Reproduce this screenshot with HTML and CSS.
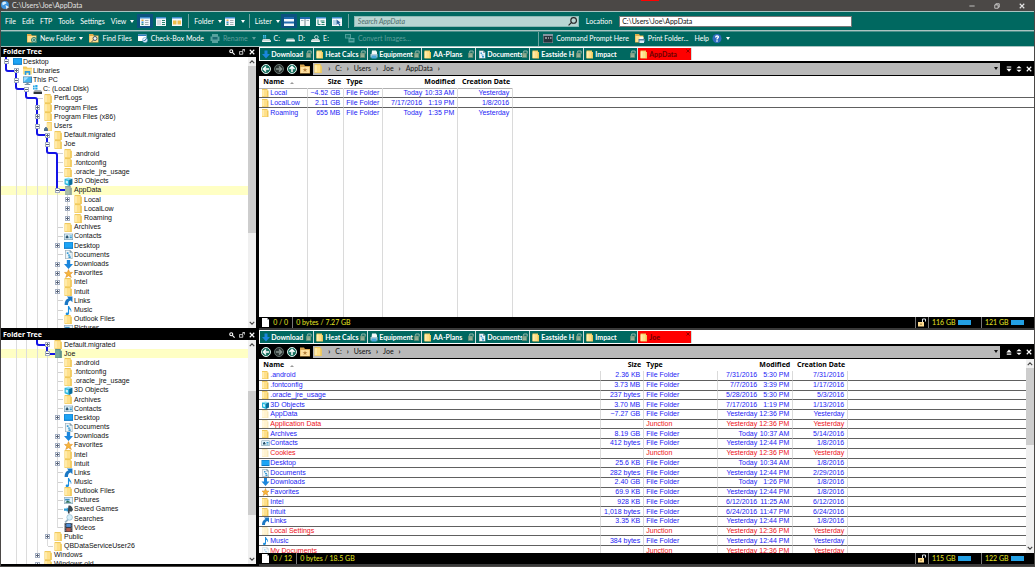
FILE: index.html
```html
<!DOCTYPE html>
<html lang="en">
<head>
    <meta charset="UTF-8">
    <meta name="viewport" content="width=device-width, initial-scale=1.0">
    <title>C:\Users\Joe\AppData</title>
    <link rel="stylesheet" href="styles.css">
</head>
<body>
<!-- Icon set -->
<svg class="defs" aria-hidden="true">
    <symbol id="folder" viewBox="0 0 16 16"><path fill="#f0c95c" d="M1 0h11v3h2v13H1z"/><path fill="#ffe08a" d="M1 2h10v13H1z"/><path fill="#ffedaf" d="M2 2h3v12H2z"/></symbol>
    <symbol id="folder-open" viewBox="0 0 16 16"><path fill="#93a79b" d="M2 0h10v3h2v13H2z"/><path fill="#a9bda9" d="M2 2h8v13H2z"/></symbol>
    <symbol id="folder-teal" viewBox="0 0 16 16"><path fill="#5f928c" d="M2 0h10v3h2v13H2z"/><path fill="#78a79b" d="M2 2h8v13H2z"/></symbol>
    <symbol id="users" viewBox="0 0 16 16"><path fill="#f4cf69" d="M5 0h9v16H5z"/><path fill="#ffe699" d="M5 2h7v13H5z"/><path fill="#50708c" d="M0 16v-5h2V9h3v2h2v5z"/></symbol>
    <symbol id="desktop" viewBox="0 0 16 16"><path fill="#0a78c8" d="M0 2h16v12H0z"/><path fill="#1ea4f4" d="M1 3h14v9H1z"/></symbol>
    <symbol id="libraries" viewBox="0 0 16 16"><path fill="#f4c95b" d="M0 1h6l2 2h8v5H0z"/><path fill="#ffe28c" d="M0 5h16v10H0z"/><path fill="#2b9be0" d="M3 16V9h10v7h-3v-4H6v4z"/></symbol>
    <symbol id="pc" viewBox="0 0 16 16"><path fill="#3a6c94" d="M0 1h16v11H0z"/><path fill="#45b4ee" d="M1 2h14v9H1z"/><path fill="#9fdcff" d="M1 11 10 2H1z"/><path fill="#7890a4" d="M6 12h4v2h3v2H3v-2h3z"/></symbol>
    <symbol id="drive" viewBox="0 0 16 16"><path fill="#24a7e8" d="M0 1h3v3H0zM4 0h4v4H4zM0 5h3v3H0zM4 5h4v3H4z"/><path fill="#a8b0b4" d="M3 9h11l2 3H1z"/><path fill="#303638" d="M1 12h15v4H1z"/></symbol>
    <symbol id="cube" viewBox="0 0 16 16"><path fill="#8fe0f4" d="m1 3 7-2 7 2-6 2z"/><path fill="#26b4dc" d="M1 3l8 2v11l-8-3z"/><path fill="#0a6d9c" d="m9 5 6-2v10l-6 3z"/><path fill="#c9f2fb" d="M3 6l4 1v5l-4-1z"/></symbol>
    <symbol id="contacts" viewBox="0 0 16 16"><path fill="#6c93a8" d="M0 3h16v11H0z"/><path fill="#dff0f8" d="M1 4h14v9H1z"/><path fill="#28516c" d="M3 11V8h1V6h3v2h1v3z"/><path fill="#3a9bd0" d="M10 6h4v2h-4zM10 9h4v2h-4z"/></symbol>
    <symbol id="doc" viewBox="0 0 16 16"><path fill="#8aa0ac" d="M2 0h9l4 4v12H2z"/><path fill="#eef5f8" d="M3 1h7v4h4v10H3z"/><path fill="#3b9cd4" d="M5 4h3v3H5zM7 8h4v2H7zM8 11h4v3H8z"/></symbol>
    <symbol id="download" viewBox="0 0 16 16"><path fill="#1b86dc" d="M5 0h6v7h5l-8 9-8-9h5z"/></symbol>
    <symbol id="star" viewBox="0 0 16 16"><path fill="#f8b63c" stroke="#d98a1c" d="m8 1 2 5h5l-4 4 2 5-5-3-5 3 2-5-4-4h5z"/></symbol>
    <symbol id="link" viewBox="0 0 16 16"><path fill="#1c78c4" d="M5 1h10v10l-3-3c-4 1-5 4-5 8H1c0-6 2-10 7-12z"/></symbol>
    <symbol id="music" viewBox="0 0 16 16"><path fill="#1e8fdf" d="M7 0h2c0 3 5 4 4 10h-1c0-3-1-4-3-4v7c0 4-6 4-6 1 0-2 2-3 4-2z"/></symbol>
    <symbol id="pictures" viewBox="0 0 16 16"><path fill="#7d9bb0" d="M0 2h16v12H0z"/><path fill="#e4f3fb" d="M1 3h14v10H1z"/><path fill="#3c8fc4" d="M2 5h8v3H2z"/><path fill="#2a6e58" d="M2 12l4-4 8 4z"/></symbol>
    <symbol id="games" viewBox="0 0 16 16"><path fill="#2d9bd4" d="M0 6h5V4l4 4-4 5v-3H0z"/><path fill="#3a4a54" d="M8 1c4-1 7 2 8 8l-3 3-3-1v4H7V8z"/></symbol>
    <symbol id="search" viewBox="0 0 16 16"><path fill="none" stroke="#9bb4c4" stroke-width="3" d="m2 15 5-5"/><circle cx="10" cy="6" r="5" fill="#d6effa" stroke="#7ea9c2"/></symbol>
    <symbol id="videos" viewBox="0 0 16 16"><path fill="#333b46" d="M1 0h14v16H1z"/><path fill="#4f8fd8" d="M4 1h8v6H4z"/><path fill="#b45a4c" d="M4 9h8v6H4z"/><path stroke="#d0d6dc" stroke-dasharray="2 2" d="M2 0v16M14 0v16"/></symbol>
    <symbol id="printer" viewBox="0 0 16 16"><path fill="#f5f9fa" d="M4 0h8l2 3v5H3z"/><path fill="#b4cbd8" d="M1 7h14v7H1z"/><path fill="#48a6dc" d="M3 10h10v6H3z"/></symbol>
    <symbol id="globe" viewBox="0 0 16 16"><circle cx="7" cy="7" r="7" fill="#3e94e0"/><path fill="#d8efff" d="M2 3c3-3 7-2 8 1L6 6l-3 2z"/><path fill="#eaf2f8" d="M8 7l7 4-3 1-2 3z"/></symbol>
    <symbol id="new-folder" viewBox="0 0 20 18"><path fill="#e2ae4c" d="M0 0h8l2 3h9v14H0z"/><path fill="#ffdf8d" d="M1 4h17v12H1z"/><circle cx="14" cy="12" r="5" fill="#dff4e6" stroke="#1f7867" stroke-width="2"/><path stroke="#176a54" stroke-width="2" d="M14 9v6M11 12h6"/></symbol>
    <symbol id="find" viewBox="0 0 20 18"><path fill="#e2ae4c" d="M0 0h8l2 3h9v14H0z"/><path fill="#ffdf8d" d="M1 4h17v12H1z"/><path stroke="#4d5860" stroke-width="2" d="m5 16 4-4"/><circle cx="12" cy="9" r="4" fill="#e4f4fa" stroke="#4d5860" stroke-width="2"/></symbol>
    <symbol id="check-mode" viewBox="0 0 20 18"><path fill="#fff" d="M0 1h17v13H0z"/><path fill="#2d79bd" d="M0 1h17v3H0z"/><circle cx="14" cy="12" r="5" fill="#e8f4fc" stroke="#3c8ac0"/><path fill="none" stroke="#17629c" stroke-width="2" d="m11 12 2 2 4-5"/></symbol>
    <symbol id="rename" viewBox="0 0 20 18"><path fill="#57a29e" d="M4 0h12v5h3v9h-3v4H4v-4H1V5h3z"/><path fill="#1b6b72" d="M5 6h10v5H5z"/></symbol>
    <symbol id="bar-drive" viewBox="0 0 20 16"><path fill="#49c0f4" d="M2 0h3v4H2zM6 0h3v4H6zM2 5h3v3H2zM6 5h3v3H6z"/><path fill="#cdd7d8" d="M2 9h15l2 3H0z"/><path fill="#f2f6f6" d="M0 12h20v4H0z"/></symbol>
    <symbol id="disk" viewBox="0 0 20 16"><path fill="#cdd7d8" d="M3 8h14l3 3H0z"/><path fill="#f2f6f6" d="M0 11h20v4H0z"/></symbol>
    <symbol id="optical" viewBox="0 0 20 16"><circle cx="12" cy="5" r="4" fill="none" stroke="#dfe8ea" stroke-width="2"/><path fill="#cdd7d8" d="M3 9h14l3 3H0z"/><path fill="#f2f6f6" d="M0 12h20v4H0z"/></symbol>
    <symbol id="convert" viewBox="0 0 20 18"><path fill="#4c9c98" d="M0 0h12v9H0z"/><path fill="#12766d" d="M2 2h8v5H2z"/><path fill="#5aa5a3" d="M7 8h12v9H7z"/><path fill="#20827a" d="M9 10h8v4H9z"/></symbol>
    <symbol id="cmd" viewBox="0 0 20 18"><path fill="#8395a0" d="M0 0h20v18H0z"/><path fill="#26323b" d="M1 4h18v13H1z"/><path stroke="#e8eef0" stroke-width="2" d="M4 8h4M10 8h2M14 8h3"/></symbol>
    <symbol id="print-folder" viewBox="0 0 20 18"><path fill="#e2ae4c" d="M0 0h8l2 3h7v14H0z"/><path fill="#ffdf8d" d="M1 4h15v12H1z"/><path fill="#f4f8fa" d="M9 6h8v5H9z"/><path fill="#4d7ea2" d="M7 10h13v6H7z"/><path fill="#d8ecf7" d="M9 13h9v5H9z"/></symbol>
    <symbol id="view-list" viewBox="0 0 20 18"><path fill="#f4f8fb" d="M0 0h20v18H0z"/><path fill="#3d8ccc" d="M0 0h20v3H0z"/><path fill="#e0a83c" d="M3 5h4v3H3z"/><path fill="#3d8ccc" d="M3 9h4v3H3z"/><path fill="#2c8c70" d="M3 13h4v3H3z"/><path stroke="#a3aeb4" stroke-width="2" d="M10 7h7M10 11h7M10 15h7"/></symbol>
    <symbol id="view-details" viewBox="0 0 20 18"><path fill="#f4f8fb" d="M0 0h20v18H0z"/><path fill="#3d8ccc" d="M0 0h20v3H0z"/><path fill="#d6dee2" d="M2 6h8v10H2z"/><path stroke="#27856e" stroke-width="2" d="M12 7h6M12 11h6M12 15h6"/></symbol>
    <symbol id="view-thumbs" viewBox="0 0 20 18"><path fill="#f4f8fb" d="M0 0h20v18H0z"/><path fill="#3d8ccc" d="M0 0h20v3H0z"/><path fill="#eebe4c" d="M2 7h7v8H2zM11 7h7v8h-7z"/></symbol>
    <symbol id="dual-h" viewBox="0 0 20 18"><path fill="#f4f8fb" d="M0 0h20v18H0z"/><path fill="#236cb0" d="M0 0h20v4H0zM0 9h20v4H0z"/></symbol>
    <symbol id="dual-v" viewBox="0 0 20 18"><path fill="#f4f8fb" d="M0 0h20v18H0z"/><path fill="#236cb0" d="M0 0h20v4H0z"/><path fill="#74868f" d="M9 4h2v14H9z"/><path fill="#9fb2ba" d="M2 6h5v2H2zM13 6h5v2h-5z"/></symbol>
    <symbol id="tree-view" viewBox="0 0 20 18"><path fill="#f4f8fb" d="M0 0h20v18H0z"/><path fill="#3d8ccc" d="M0 0h20v3H0z"/><path fill="none" stroke="#27856e" stroke-width="2" d="M4 5v10h5M9 8h8M11 11h6M11 15h6"/></symbol>
    <symbol id="viewer" viewBox="0 0 20 18"><path fill="#f4f8fb" d="M0 0h20v18H0z"/><path fill="#3d8ccc" d="M0 0h20v3H0z"/><path fill="#b6d4ea" d="M2 6h6v10H2z"/><path fill="#285f9c" d="M9 5l8 6-3 1 3 4-2 2-3-5-3 3z"/></symbol>
    <symbol id="lock" viewBox="0 0 14 18"><path fill="none" stroke="#a9c2b2" stroke-width="2" d="M4 8V2h8v6"/><path fill="#5f8a74" d="M0 6h12v12H0z"/><path stroke="#a7bfa2" stroke-width="2" d="M2 9h8M2 12h8M2 15h8"/></symbol>
    <symbol id="unlock" viewBox="0 0 18 18"><path fill="none" stroke="#dce2e4" stroke-width="2" d="M9 8V2h6v5"/><path fill="#ffdc91" d="M0 8h12v9H0z"/><path fill="#7c5c20" d="M5 11h2v3H5z"/></symbol>
    <symbol id="page" viewBox="0 0 14 18"><path fill="#fff" d="M0 0h10l4 4v14H0z"/><path fill="#b9c0c4" d="M10 0l4 4h-4z"/></symbol>
    <symbol id="back" viewBox="0 0 20 20"><circle cx="10" cy="10" r="9" fill="#18705f" stroke="#e2f2ee" stroke-width="2"/><path fill="none" stroke="#fff" stroke-width="3" d="M16 10H5M10 5l-5 5 5 5"/></symbol>
    <symbol id="forward" viewBox="0 0 20 20"><circle cx="10" cy="10" r="9" fill="#2c3432" stroke="#65726e" stroke-width="2"/><path fill="none" stroke="#87948f" stroke-width="3" d="M4 10h11M10 5l5 5-5 5"/></symbol>
    <symbol id="up" viewBox="0 0 20 20"><circle cx="10" cy="10" r="9" fill="#18705f" stroke="#e2f2ee" stroke-width="2"/><path fill="none" stroke="#fff" stroke-width="3" d="M10 16V5M5 10l5-5 5 5"/></symbol>
    <symbol id="fav-folder" viewBox="0 0 20 20"><path fill="#d9a650" d="M0 1h8l2 3h10v15H0z"/><path fill="#ffe0a0" d="M1 6h18v12H1z"/><path fill="#b98542" d="m10 7 1 3h4l-3 2 1 4-3-2-3 2 1-4-3-2h4z"/></symbol>
    <symbol id="help" viewBox="0 0 20 20"><circle cx="10" cy="10" r="10" fill="#2f6cc0"/><path fill="none" stroke="#fff" stroke-width="3" d="M7 8c0-5 7-4 6-1-1 2-3 2-3 5M10 14v3"/></symbol>
    <symbol id="glass" viewBox="0 0 16 16"><circle cx="10" cy="6" r="5" fill="none" stroke="currentColor" stroke-width="2"/><path stroke="currentColor" stroke-width="2" d="m1 15 5-5"/></symbol>
    <symbol id="find-small" viewBox="0 0 16 16"><circle cx="6" cy="6" r="4" fill="none" stroke="currentColor" stroke-width="3"/><path stroke="currentColor" stroke-width="3" d="m9 9 6 6"/></symbol>
    <symbol id="pin" viewBox="0 0 16 16"><path fill="none" stroke="currentColor" stroke-width="2" d="M1 7h9v7H1zM8 6l6-5M9 1h6v6"/></symbol>
    <symbol id="close" viewBox="0 0 16 16"><path stroke="currentColor" stroke-width="3" d="m2 2 12 12M14 2 2 14"/></symbol>
    <symbol id="restore" viewBox="0 0 16 16"><path fill="none" stroke="currentColor" stroke-width="2" d="M2 5h9v9H2zM5 5V2h9v9h-3"/></symbol>
    <symbol id="minimize" viewBox="0 0 16 16"><path stroke="currentColor" stroke-width="2" d="M1 8h14"/></symbol>
    <symbol id="pane-down" viewBox="0 0 16 16"><path fill="currentColor" d="M2 1h12v3H2zM1 7h14l-7 8z"/></symbol>
    <symbol id="pane-up" viewBox="0 0 16 16"><path fill="currentColor" d="M2 12h12v3H2zM1 9h14L8 1z"/></symbol>
    <symbol id="pane-split" viewBox="0 0 16 16"><path fill="currentColor" d="M1 6h14L8 0zM1 10h14l-7 6z"/></symbol>
    <symbol id="chev-up" viewBox="0 0 16 16"><path fill="none" stroke="#444" stroke-width="3" d="m2 11 6-6 6 6"/></symbol>
    <symbol id="chev-down" viewBox="0 0 16 16"><path fill="none" stroke="#444" stroke-width="3" d="m2 5 6 6 6-6"/></symbol>
</svg>

<div class="app">
    <header class="titlebar">
        <svg class="icon"><use href="#globe"/></svg>
        <h1>C:\Users\Joe\AppData</h1>
        <span class="recording"></span>
        <div class="window-buttons">
            <button aria-label="Minimize"><svg class="mini"><use href="#minimize"/></svg></button>
            <button aria-label="Restore"><svg class="mini"><use href="#restore"/></svg></button>
            <button aria-label="Close"><svg class="mini"><use href="#close"/></svg></button>
        </div>
    </header>

    <nav class="toolbar menubar">
        <div class="group menus">
            <button>File</button><button>Edit</button><button>FTP</button><button>Tools</button><button>Settings</button><button class="drop">View</button>
        </div>
        <div class="group views">
            <button class="on" aria-label="List view"><svg class="tool"><use href="#view-list"/></svg></button>
            <button aria-label="Details view"><svg class="tool"><use href="#view-details"/></svg></button>
            <button aria-label="Thumbnails view"><svg class="tool"><use href="#view-thumbs"/></svg></button>
        </div>
        <div class="group sep">
            <button class="drop">Folder</button>
            <button class="drop wide" aria-label="Folder format"><svg class="tool"><use href="#view-list"/></svg></button>
        </div>
        <div class="group sep">
            <button class="drop">Lister</button>
        </div>
        <div class="group views">
            <button class="on" aria-label="Dual horizontal"><svg class="tool"><use href="#dual-h"/></svg></button>
            <button aria-label="Dual vertical"><svg class="tool"><use href="#dual-v"/></svg></button>
            <button aria-label="Tree"><svg class="tool"><use href="#tree-view"/></svg></button>
            <button aria-label="Viewer"><svg class="tool"><use href="#viewer"/></svg></button>
        </div>
        <div class="group sep fields">
            <div class="search">
                <input type="search" aria-label="Search" placeholder="Search AppData">
                <svg class="icon"><use href="#glass"/></svg>
            </div>
            <label for="location">Location</label>
            <input id="location" class="location" type="text" value="C:\Users\Joe\AppData">
        </div>
    </nav>

    <nav class="toolbar actions">
        <div class="group main-actions">
            <button class="drop"><svg class="tool"><use href="#new-folder"/></svg>New Folder</button>
            <button><svg class="tool"><use href="#find"/></svg>Find Files</button>
            <button><svg class="tool"><use href="#check-mode"/></svg>Check-Box Mode</button>
            <button class="drop muted"><svg class="tool"><use href="#rename"/></svg>Rename</button>
            <span class="drives">
                <button><svg class="drive"><use href="#bar-drive"/></svg>C:</button>
                <button><svg class="drive"><use href="#disk"/></svg>D:</button>
                <button><svg class="drive"><use href="#optical"/></svg>E:</button>
            </span>
            <button class="muted"><svg class="tool"><use href="#convert"/></svg>Convert Images...</button>
        </div>
        <div class="group sep more-actions">
            <button><svg class="tool"><use href="#cmd"/></svg>Command Prompt Here</button>
            <button><svg class="tool"><use href="#print-folder"/></svg>Print Folder...</button>
            <button class="drop help">Help <svg class="tool"><use href="#help"/></svg></button>
        </div>
    </nav>

    <main class="workspace">
        <!-- Upper tree -->
        <aside class="tree-pane">
            <div class="pane-title">
                <h2>Folder Tree</h2>
                <button aria-label="Find"><svg class="mini"><use href="#find-small"/></svg></button>
                <button aria-label="Float"><svg class="mini"><use href="#pin"/></svg></button>
                <button aria-label="Close tree"><svg class="mini"><use href="#close"/></svg></button>
            </div>
            <div class="tree-view">
                <div class="tree-scroll">
                    <svg class="guides" aria-hidden="true">
                        <path class="guide" d="M15 23V280M25 32V280M36 41V280M46 96V280M56 96V280M66 138V161"/>
                        <path class="trail" d="M5 0V12Q5 14 7 14H15V30Q15 32 17 32H25V39Q25 41 27 41H34Q36 41 36 43V76Q36 78 38 78H46V94Q46 96 48 96H54Q56 96 56 98V133H64"/>
                    </svg>
                    <ul class="tree">
                        <li class="l0"><button class="exp open" aria-label="Collapse"></button><svg class="icon"><use href="#desktop"/></svg><a href="#">Desktop</a></li>
                        <li class="l1"><button class="exp" aria-label="Expand"></button><svg class="icon"><use href="#libraries"/></svg><a href="#">Libraries</a></li>
                        <li class="l1"><button class="exp open" aria-label="Collapse"></button><svg class="icon"><use href="#pc"/></svg><a href="#">This PC</a></li>
                        <li class="l2"><button class="exp open" aria-label="Collapse"></button><svg class="icon"><use href="#drive"/></svg><a href="#">C: (Local Disk)</a></li>
                        <li class="l3 leaf"><svg class="icon"><use href="#folder"/></svg><a href="#">PerfLogs</a></li>
                        <li class="l3"><button class="exp" aria-label="Expand"></button><svg class="icon"><use href="#folder"/></svg><a href="#">Program Files</a></li>
                        <li class="l3"><button class="exp" aria-label="Expand"></button><svg class="icon"><use href="#folder"/></svg><a href="#">Program Files (x86)</a></li>
                        <li class="l3"><button class="exp open" aria-label="Collapse"></button><svg class="icon"><use href="#users"/></svg><a href="#">Users</a></li>
                        <li class="l4"><button class="exp" aria-label="Expand"></button><svg class="icon"><use href="#folder"/></svg><a href="#">Default.migrated</a></li>
                        <li class="l4"><button class="exp open" aria-label="Collapse"></button><svg class="icon"><use href="#folder"/></svg><a href="#">Joe</a></li>
                        <li class="l5 leaf"><svg class="icon"><use href="#folder"/></svg><a href="#">.android</a></li>
                        <li class="l5 leaf"><svg class="icon"><use href="#folder"/></svg><a href="#">.fontconfig</a></li>
                        <li class="l5 leaf"><svg class="icon"><use href="#folder"/></svg><a href="#">.oracle_jre_usage</a></li>
                        <li class="l5 leaf"><svg class="icon"><use href="#cube"/></svg><a href="#">3D Objects</a></li>
                        <li class="l5 selected"><button class="exp open" aria-label="Collapse"></button><svg class="icon"><use href="#folder-open"/></svg><a href="#">AppData</a></li>
                        <li class="l6"><button class="exp" aria-label="Expand"></button><svg class="icon"><use href="#folder"/></svg><a href="#">Local</a></li>
                        <li class="l6"><button class="exp" aria-label="Expand"></button><svg class="icon"><use href="#folder"/></svg><a href="#">LocalLow</a></li>
                        <li class="l6"><button class="exp" aria-label="Expand"></button><svg class="icon"><use href="#folder"/></svg><a href="#">Roaming</a></li>
                        <li class="l5 leaf"><svg class="icon"><use href="#folder"/></svg><a href="#">Archives</a></li>
                        <li class="l5 leaf"><svg class="icon"><use href="#contacts"/></svg><a href="#">Contacts</a></li>
                        <li class="l5"><button class="exp" aria-label="Expand"></button><svg class="icon"><use href="#desktop"/></svg><a href="#">Desktop</a></li>
                        <li class="l5 leaf"><svg class="icon"><use href="#doc"/></svg><a href="#">Documents</a></li>
                        <li class="l5"><button class="exp" aria-label="Expand"></button><svg class="icon"><use href="#download"/></svg><a href="#">Downloads</a></li>
                        <li class="l5"><button class="exp" aria-label="Expand"></button><svg class="icon"><use href="#star"/></svg><a href="#">Favorites</a></li>
                        <li class="l5"><button class="exp" aria-label="Expand"></button><svg class="icon"><use href="#folder"/></svg><a href="#">Intel</a></li>
                        <li class="l5"><button class="exp" aria-label="Expand"></button><svg class="icon"><use href="#folder"/></svg><a href="#">Intuit</a></li>
                        <li class="l5 leaf"><svg class="icon"><use href="#link"/></svg><a href="#">Links</a></li>
                        <li class="l5 leaf"><svg class="icon"><use href="#music"/></svg><a href="#">Music</a></li>
                        <li class="l5 leaf"><svg class="icon"><use href="#folder"/></svg><a href="#">Outlook Files</a></li>
                        <li class="l5 leaf"><svg class="icon"><use href="#pictures"/></svg><a href="#">Pictures</a></li>
                    </ul>
                </div>
                <div class="scrollbar">
                    <svg class="mini"><use href="#chev-up"/></svg>
                    <div class="track"><div class="thumb thumb-top"></div></div>
                    <svg class="mini"><use href="#chev-down"/></svg>
                </div>
            </div>
        </aside>

        <!-- Upper lister -->
        <section class="lister">
            <div class="tabs">
                <a class="tab" href="#"><svg class="icon"><use href="#download"/></svg><span>Download</span><svg class="lock"><use href="#lock"/></svg></a>
                <a class="tab" href="#"><svg class="icon"><use href="#folder"/></svg><span>Heat Calcs</span><svg class="lock"><use href="#lock"/></svg></a>
                <a class="tab" href="#"><svg class="icon"><use href="#printer"/></svg><span>Equipment</span><svg class="lock"><use href="#lock"/></svg></a>
                <a class="tab" href="#"><svg class="icon"><use href="#folder"/></svg><span>AA-Plans</span><svg class="lock"><use href="#lock"/></svg></a>
                <a class="tab" href="#"><svg class="icon"><use href="#doc"/></svg><span>Documents</span><svg class="lock"><use href="#lock"/></svg></a>
                <a class="tab" href="#"><svg class="icon"><use href="#folder"/></svg><span>Eastside H</span><svg class="lock"><use href="#lock"/></svg></a>
                <a class="tab" href="#"><svg class="icon"><use href="#folder"/></svg><span>Impact</span><svg class="lock"><use href="#lock"/></svg></a>
                <a class="tab active" href="#"><svg class="icon"><use href="#folder"/></svg><span>AppData</span><svg class="tab-close"><use href="#close"/></svg></a>
            </div>
            <div class="pathbar">
                <button aria-label="Back"><svg class="nav"><use href="#back"/></svg></button>
                <button aria-label="Forward"><svg class="nav"><use href="#forward"/></svg></button>
                <button aria-label="Up"><svg class="nav"><use href="#up"/></svg></button>
                <button aria-label="Favorites"><svg class="nav"><use href="#fav-folder"/></svg></button>
                <div class="crumbs">
                    <svg class="icon"><use href="#folder"/></svg><b>›</b><a href="#">C:</a><b>›</b><a href="#">Users</a><b>›</b><a href="#">Joe</a><b>›</b><a href="#">AppData</a><b>›</b>
                    <button class="drop history" aria-label="History"></button>
                </div>
                <div class="pane-buttons">
                    <button aria-label="Move down"><svg class="mini"><use href="#pane-down"/></svg></button>
                    <button aria-label="Swap"><svg class="mini"><use href="#pane-split"/></svg></button>
                    <button aria-label="Close lister"><svg class="mini"><use href="#close"/></svg></button>
                </div>
            </div>
            <div class="files-view">
                <div class="files-scroll">
                    <table class="files short">
                        <colgroup><col class="c-name-s"><col class="c-size-s"><col class="c-type-s"><col class="c-mod"><col class="c-created"><col></colgroup>
                        <thead><tr><th class="name">Name <i class="sort"></i></th><th class="num">Size</th><th>Type</th><th class="num">Modified</th><th class="num">Creation Date</th><td></td></tr></thead>
                        <tbody>
                            <tr class="focus"><td class="name"><svg class="icon"><use href="#folder"/></svg>Local</td><td class="num">~4.52 GB</td><td>File Folder</td><td class="num">Today<span class="time">10:33 AM</span></td><td class="num">Yesterday</td><td></td></tr>
                            <tr><td class="name"><svg class="icon"><use href="#folder"/></svg>LocalLow</td><td class="num">2.11 GB</td><td>File Folder</td><td class="num">7/17/2016<span class="time">1:19 PM</span></td><td class="num">1/8/2016</td><td></td></tr>
                            <tr class="last"><td class="name"><svg class="icon"><use href="#folder"/></svg>Roaming</td><td class="num">655 MB</td><td>File Folder</td><td class="num">Today<span class="time">1:35 PM</span></td><td class="num">Yesterday</td><td></td></tr>
                            <tr class="rest"><td></td><td></td><td></td><td></td><td></td><td></td></tr>
                        </tbody>
                    </table>
                </div>
            </div>
            <footer class="status">
                <svg class="page"><use href="#page"/></svg><span>0 / 0</span><span class="bytes">0 bytes / 7.27 GB</span>
                <span class="cell lock-cell"><svg class="icon"><use href="#unlock"/></svg></span>
                <span class="cell disk">116 GB<i class="meter"></i></span>
                <span class="cell disk">121 GB<i class="meter"></i></span>
            </footer>
        </section>

        <!-- Lower tree -->
        <aside class="tree-pane">
            <div class="pane-title">
                <h2>Folder Tree</h2>
                <button aria-label="Find"><svg class="mini"><use href="#find-small"/></svg></button>
                <button aria-label="Float"><svg class="mini"><use href="#pin"/></svg></button>
                <button aria-label="Close tree"><svg class="mini"><use href="#close"/></svg></button>
            </div>
            <div class="tree-view">
                <div class="tree-scroll">
                    <svg class="guides" aria-hidden="true">
                        <path class="guide" d="M15 0V240M25 0V240M36 5V215M46 14V206M56 18V188"/>
                        <path class="trail" d="M36 0V3Q36 5 38 5H46V14H54"/>
                    </svg>
                    <ul class="tree">
                        <li class="l4"><button class="exp" aria-label="Expand"></button><svg class="icon"><use href="#folder"/></svg><a href="#">Default.migrated</a></li>
                        <li class="l4 selected"><button class="exp open" aria-label="Collapse"></button><svg class="icon"><use href="#folder-teal"/></svg><a href="#">Joe</a></li>
                        <li class="l5 leaf"><svg class="icon"><use href="#folder"/></svg><a href="#">.android</a></li>
                        <li class="l5 leaf"><svg class="icon"><use href="#folder"/></svg><a href="#">.fontconfig</a></li>
                        <li class="l5 leaf"><svg class="icon"><use href="#folder"/></svg><a href="#">.oracle_jre_usage</a></li>
                        <li class="l5 leaf"><svg class="icon"><use href="#cube"/></svg><a href="#">3D Objects</a></li>
                        <li class="l5 leaf"><svg class="icon"><use href="#folder"/></svg><a href="#">Archives</a></li>
                        <li class="l5 leaf"><svg class="icon"><use href="#contacts"/></svg><a href="#">Contacts</a></li>
                        <li class="l5"><button class="exp" aria-label="Expand"></button><svg class="icon"><use href="#desktop"/></svg><a href="#">Desktop</a></li>
                        <li class="l5 leaf"><svg class="icon"><use href="#doc"/></svg><a href="#">Documents</a></li>
                        <li class="l5"><button class="exp" aria-label="Expand"></button><svg class="icon"><use href="#download"/></svg><a href="#">Downloads</a></li>
                        <li class="l5"><button class="exp" aria-label="Expand"></button><svg class="icon"><use href="#star"/></svg><a href="#">Favorites</a></li>
                        <li class="l5"><button class="exp" aria-label="Expand"></button><svg class="icon"><use href="#folder"/></svg><a href="#">Intel</a></li>
                        <li class="l5"><button class="exp" aria-label="Expand"></button><svg class="icon"><use href="#folder"/></svg><a href="#">Intuit</a></li>
                        <li class="l5 leaf"><svg class="icon"><use href="#link"/></svg><a href="#">Links</a></li>
                        <li class="l5 leaf"><svg class="icon"><use href="#music"/></svg><a href="#">Music</a></li>
                        <li class="l5 leaf"><svg class="icon"><use href="#folder"/></svg><a href="#">Outlook Files</a></li>
                        <li class="l5 leaf"><svg class="icon"><use href="#pictures"/></svg><a href="#">Pictures</a></li>
                        <li class="l5 leaf"><svg class="icon"><use href="#games"/></svg><a href="#">Saved Games</a></li>
                        <li class="l5 leaf"><svg class="icon"><use href="#search"/></svg><a href="#">Searches</a></li>
                        <li class="l5 leaf"><svg class="icon"><use href="#videos"/></svg><a href="#">Videos</a></li>
                        <li class="l4"><button class="exp" aria-label="Expand"></button><svg class="icon"><use href="#folder"/></svg><a href="#">Public</a></li>
                        <li class="l4 leaf"><svg class="icon"><use href="#folder"/></svg><a href="#">QBDataServiceUser26</a></li>
                        <li class="l3"><button class="exp" aria-label="Expand"></button><svg class="icon"><use href="#folder"/></svg><a href="#">Windows</a></li>
                        <li class="l3"><button class="exp" aria-label="Expand"></button><svg class="icon"><use href="#folder"/></svg><a href="#">Windows.old</a></li>
                    </ul>
                </div>
                <div class="scrollbar">
                    <svg class="mini"><use href="#chev-up"/></svg>
                    <div class="track"><div class="thumb thumb-mid"></div></div>
                    <svg class="mini"><use href="#chev-down"/></svg>
                </div>
            </div>
        </aside>

        <!-- Lower lister -->
        <section class="lister">
            <div class="tabs">
                <a class="tab" href="#"><svg class="icon"><use href="#download"/></svg><span>Download</span><svg class="lock"><use href="#lock"/></svg></a>
                <a class="tab" href="#"><svg class="icon"><use href="#folder"/></svg><span>Heat Calcs</span><svg class="lock"><use href="#lock"/></svg></a>
                <a class="tab" href="#"><svg class="icon"><use href="#printer"/></svg><span>Equipment</span><svg class="lock"><use href="#lock"/></svg></a>
                <a class="tab" href="#"><svg class="icon"><use href="#folder"/></svg><span>AA-Plans</span><svg class="lock"><use href="#lock"/></svg></a>
                <a class="tab" href="#"><svg class="icon"><use href="#doc"/></svg><span>Documents</span><svg class="lock"><use href="#lock"/></svg></a>
                <a class="tab" href="#"><svg class="icon"><use href="#folder"/></svg><span>Eastside H</span><svg class="lock"><use href="#lock"/></svg></a>
                <a class="tab" href="#"><svg class="icon"><use href="#folder"/></svg><span>Impact</span><svg class="lock"><use href="#lock"/></svg></a>
                <a class="tab active" href="#"><svg class="icon"><use href="#folder"/></svg><span>Joe</span><svg class="tab-close"><use href="#close"/></svg></a>
            </div>
            <div class="pathbar">
                <button aria-label="Back"><svg class="nav"><use href="#back"/></svg></button>
                <button aria-label="Forward"><svg class="nav"><use href="#forward"/></svg></button>
                <button aria-label="Up"><svg class="nav"><use href="#up"/></svg></button>
                <button aria-label="Favorites"><svg class="nav"><use href="#fav-folder"/></svg></button>
                <div class="crumbs">
                    <svg class="icon"><use href="#folder"/></svg><b>›</b><a href="#">C:</a><b>›</b><a href="#">Users</a><b>›</b><a href="#">Joe</a><b>›</b>
                    <button class="drop history" aria-label="History"></button>
                </div>
                <div class="pane-buttons">
                    <button aria-label="Move up"><svg class="mini"><use href="#pane-up"/></svg></button>
                    <button aria-label="Swap"><svg class="mini"><use href="#pane-split"/></svg></button>
                    <button aria-label="Close lister"><svg class="mini"><use href="#close"/></svg></button>
                </div>
            </div>
            <div class="files-view">
                <div class="files-scroll">
                    <table class="files long">
                        <colgroup><col class="c-name"><col class="c-size"><col class="c-type"><col class="c-mod"><col class="c-created"><col></colgroup>
                        <thead><tr><th class="name">Name <i class="sort"></i></th><th class="num">Size</th><th>Type</th><th class="num">Modified</th><th class="num">Creation Date</th><td></td></tr></thead>
                        <tbody>
                            <tr><td class="name"><svg class="icon"><use href="#folder"/></svg>.android</td><td class="num">2.36 KB</td><td>File Folder</td><td class="num">7/31/2016<span class="time">5:30 PM</span></td><td class="num">7/31/2016</td><td></td></tr>
                            <tr><td class="name"><svg class="icon"><use href="#folder"/></svg>.fontconfig</td><td class="num">3.73 MB</td><td>File Folder</td><td class="num">7/7/2016<span class="time">3:39 PM</span></td><td class="num">1/17/2016</td><td></td></tr>
                            <tr><td class="name"><svg class="icon"><use href="#folder"/></svg>.oracle_jre_usage</td><td class="num">237 bytes</td><td>File Folder</td><td class="num">5/28/2016<span class="time">5:30 PM</span></td><td class="num">5/3/2016</td><td></td></tr>
                            <tr><td class="name"><svg class="icon"><use href="#cube"/></svg>3D Objects</td><td class="num">3.70 MB</td><td>File Folder</td><td class="num">7/17/2016<span class="time">1:19 PM</span></td><td class="num">1/13/2016</td><td></td></tr>
                            <tr><td class="name"><svg class="icon faded"><use href="#folder"/></svg>AppData</td><td class="num">~7.27 GB</td><td>File Folder</td><td class="num">Yesterday<span class="time">12:36 PM</span></td><td class="num">Yesterday</td><td></td></tr>
                            <tr class="junction"><td class="name"><svg class="icon faded"><use href="#folder"/></svg>Application Data</td><td></td><td>Junction</td><td class="num">Yesterday<span class="time">12:36 PM</span></td><td class="num">Yesterday</td><td></td></tr>
                            <tr><td class="name"><svg class="icon"><use href="#folder"/></svg>Archives</td><td class="num">8.19 GB</td><td>File Folder</td><td class="num">Today<span class="time">10:37 AM</span></td><td class="num">5/14/2016</td><td></td></tr>
                            <tr><td class="name"><svg class="icon"><use href="#contacts"/></svg>Contacts</td><td class="num">412 bytes</td><td>File Folder</td><td class="num">Yesterday<span class="time">12:44 PM</span></td><td class="num">1/8/2016</td><td></td></tr>
                            <tr class="junction"><td class="name"><svg class="icon faded"><use href="#folder"/></svg>Cookies</td><td></td><td>Junction</td><td class="num">Yesterday<span class="time">12:36 PM</span></td><td class="num">Yesterday</td><td></td></tr>
                            <tr><td class="name"><svg class="icon"><use href="#desktop"/></svg>Desktop</td><td class="num">25.6 KB</td><td>File Folder</td><td class="num">Today<span class="time">10:34 AM</span></td><td class="num">1/8/2016</td><td></td></tr>
                            <tr><td class="name"><svg class="icon"><use href="#doc"/></svg>Documents</td><td class="num">282 bytes</td><td>File Folder</td><td class="num">Yesterday<span class="time">12:44 PM</span></td><td class="num">2/29/2016</td><td></td></tr>
                            <tr><td class="name"><svg class="icon"><use href="#download"/></svg>Downloads</td><td class="num">2.40 GB</td><td>File Folder</td><td class="num">Today<span class="time">1:26 PM</span></td><td class="num">1/8/2016</td><td></td></tr>
                            <tr><td class="name"><svg class="icon"><use href="#star"/></svg>Favorites</td><td class="num">69.9 KB</td><td>File Folder</td><td class="num">Yesterday<span class="time">12:44 PM</span></td><td class="num">1/8/2016</td><td></td></tr>
                            <tr><td class="name"><svg class="icon"><use href="#folder"/></svg>Intel</td><td class="num">928 KB</td><td>File Folder</td><td class="num">6/12/2016<span class="time">11:25 AM</span></td><td class="num">6/12/2016</td><td></td></tr>
                            <tr><td class="name"><svg class="icon"><use href="#folder"/></svg>Intuit</td><td class="num">1,018 bytes</td><td>File Folder</td><td class="num">6/24/2016<span class="time">11:47 PM</span></td><td class="num">6/24/2016</td><td></td></tr>
                            <tr><td class="name"><svg class="icon"><use href="#link"/></svg>Links</td><td class="num">3.35 KB</td><td>File Folder</td><td class="num">Yesterday<span class="time">12:44 PM</span></td><td class="num">1/8/2016</td><td></td></tr>
                            <tr class="junction"><td class="name"><svg class="icon faded"><use href="#folder"/></svg>Local Settings</td><td></td><td>Junction</td><td class="num">Yesterday<span class="time">12:36 PM</span></td><td class="num">Yesterday</td><td></td></tr>
                            <tr><td class="name"><svg class="icon"><use href="#music"/></svg>Music</td><td class="num">384 bytes</td><td>File Folder</td><td class="num">Yesterday<span class="time">12:44 PM</span></td><td class="num">Yesterday</td><td></td></tr>
                            <tr class="junction"><td class="name"><svg class="icon faded"><use href="#doc"/></svg>My Documents</td><td></td><td>Junction</td><td class="num">Yesterday<span class="time">12:36 PM</span></td><td class="num">Yesterday</td><td></td></tr>
                        </tbody>
                    </table>
                </div>
                <div class="scrollbar">
                    <svg class="mini"><use href="#chev-up"/></svg>
                    <div class="track"><div class="thumb thumb-files"></div></div>
                    <svg class="mini"><use href="#chev-down"/></svg>
                </div>
            </div>
            <footer class="status">
                <svg class="page"><use href="#page"/></svg><span>0 / 12</span><span class="bytes">0 bytes / 18.5 GB</span>
                <span class="cell lock-cell"><svg class="icon"><use href="#unlock"/></svg></span>
                <span class="cell disk">115 GB<i class="meter"></i></span>
                <span class="cell disk">122 GB<i class="meter"></i></span>
            </footer>
        </section>
    </main>
</div>
</body>
</html>
```
FILE: styles.css
```css
* { box-sizing: border-box; }
body { margin: 0; font-family: Lato, "Open Sans", sans-serif; font-size: 7px; line-height: 9px; color: #fff; background: #4b4846; }
button { display: flex; align-items: center; padding: 0; border: 0; background: none; color: inherit; font: inherit; white-space: nowrap; }
input { font: inherit; min-width: 0; }
a { color: inherit; text-decoration: none; }
h1, h2 { margin: 0; font-size: 7px; font-weight: 400; }
svg { flex: none; display: block; }

.defs { position: absolute; width: 0; height: 0; }
.icon { width: 9px; height: 9px; }
.mini { width: 6px; height: 6px; }
.tool { width: 10px; height: 9px; }
.drive { width: 9px; height: 7px; }
.faded { opacity: 0.4; }

.app { display: flex; flex-direction: column; height: 100vh; border: 1px solid #4b4846; border-width: 0 1px 1px; }

/* Title bar */
.titlebar { display: flex; align-items: center; gap: 2px; height: 11px; color: #e4e4e4; position: relative; }
.recording { position: absolute; top: 0; left: 62%; width: 18px; height: 1px; background: #f00; }
.window-buttons { display: flex; gap: 19px; margin-left: auto; padding-right: 9px; }

/* Toolbars */
.toolbar { display: flex; align-items: center; background: #006860; border-top: 1px solid #a9c4c1; }
.menubar { height: 19px; }
.actions { height: 17px; border-bottom: 1px solid #a9c4c1; box-shadow: inset 0 1px #4c908b; }
.group { display: flex; align-items: center; }
.sep { border-left: 1px solid #6ba39e; height: 14px; }
.menus { gap: 6px; padding: 0 3px 0 4px; }
.drop::after { content: ""; margin-left: 4px; border: 2px solid transparent; border-top: 3px solid currentColor; border-bottom: 0; }
.drop.wide::after { margin-left: 6px; }
.views button { width: 16px; height: 14px; justify-content: center; }
.views .on { background: #0c5280; }
.menubar .sep { margin-left: 3px; padding: 0 1px 0 5px; gap: 3px; }
.menubar .fields { flex: 1; gap: 7px; padding-left: 5px; }
.search { position: relative; width: 225px; }
.search input { display: block; width: 100%; height: 11px; padding: 0 12px 0 3px; border: 1px solid #8dbab6; background: #b8d6d3; appearance: none; }
.search input::placeholder { color: #4f6e6b; font-style: italic; }
.search .icon { position: absolute; top: 1px; right: 2px; color: #222; }
.location { width: 233px; height: 11px; padding: 0 2px; border: 1px solid #777; background: #fff; color: #111; }

.main-actions { flex: 0 0 52%; gap: 6px; padding-left: 26px; }
.main-actions button { gap: 3px; }
.main-actions .drop::after { margin-left: 1px; }
.muted { color: #5f9f9b; }
.drives { display: flex; gap: 6px; margin-right: 10px; }
.more-actions { gap: 6px; padding-left: 4px; }
.more-actions button { gap: 3px; }
.more-actions .help::after { margin-left: 1px; }

/* Panes */
.workspace { flex: 1; min-height: 0; display: grid; grid-template-columns: 25% 1fr; grid-template-rows: 6fr 5fr; background: #000; }
.tree-pane { display: flex; flex-direction: column; min-height: 0; border-right: 3px solid #000; border-bottom: 2px solid #000; }
.pane-title { display: flex; align-items: center; gap: 4px; height: 10px; padding: 0 1px 0 2px; background: #000; }
.pane-title h2 { flex: 1; font-family: "Noto Sans", sans-serif; font-weight: 700; line-height: 10px; }
.tree-view { flex: 1; min-height: 0; display: flex; background: #fff; }
.tree-scroll { position: relative; flex: 1; overflow: hidden; }
.guides { position: absolute; top: 0; left: 0; width: 100%; height: 100%; z-index: 1; pointer-events: none; }
.guide { fill: none; stroke: #dcdcdc; shape-rendering: crispEdges; }
.trail { fill: none; stroke: #1414e6; stroke-width: 2; }

.tree { display: flex; flex-direction: column; height: calc(100% + 5px); margin: 0; padding: 0; list-style: none; font-family: "Liberation Sans", Arial, sans-serif; line-height: 8px; color: #111; }
.tree li { flex: 1; min-height: 0; display: flex; align-items: center; }
.tree a { margin-left: 1px; white-space: nowrap; }
.tree .icon { margin-left: 4px; }
.tree .selected { background: #ffffc4; }
.exp { position: relative; z-index: 2; width: 5px; height: 5px; border: 1px solid #a4afc2; background: linear-gradient(#5a6478, #5a6478) center / 3px 1px no-repeat, linear-gradient(#5a6478, #5a6478) center / 1px 3px no-repeat, #fff; }
.exp.open { background: linear-gradient(#5a6478, #5a6478) center / 3px 1px no-repeat, #fff; }
.leaf::before { content: ""; width: 5px; height: 1px; margin-left: 3px; margin-right: -3px; background: #d0d0d0; }
.l0 { padding-left: 3px; }
.l1 { padding-left: 13px; }
.l2 { padding-left: 23px; }
.l3 { padding-left: 34px; }
.l4 { padding-left: 44px; }
.l5 { padding-left: 54px; }
.l6 { padding-left: 64px; }

.scrollbar { display: flex; flex-direction: column; align-items: center; width: 8px; padding: 2px 0; background: #f0f0f0; }
.track { flex: 1; width: 100%; padding: 1px 0; }
.thumb { width: 100%; background: #cdcdcd; }
.thumb-top { height: 66%; }
.thumb-mid { height: 60%; margin-top: 42px; }
.thumb-files { height: 44%; }

/* Listers */
.lister { display: flex; flex-direction: column; min-width: 0; min-height: 0; border-bottom: 2px solid #3a3a3a; }
.tabs { display: flex; height: 14px; padding: 1px 0 1px 1px; background: #fff; }
.tab { display: flex; align-items: center; gap: 1px; width: 54px; padding: 0 1px 0 2px; background: #006860; border-right: 1px solid #cfdedc; font-weight: 700; }
.tab span { flex: 1; min-width: 0; white-space: nowrap; }
.tab .icon { width: 8px; }
.tab.active { background: #f00; color: #6c0000; }
.lock { width: 6px; height: 8px; }
.tab-close { width: 4px; height: 4px; align-self: flex-start; margin-top: 1px; }
.pathbar { display: flex; align-items: center; gap: 3px; height: 15px; padding: 1px 0 1px 2px; }
.nav { width: 10px; height: 10px; }
.crumbs { flex: 1; display: flex; align-items: center; gap: 5px; height: 12px; padding: 0 2px 0 1px; background: #b9b9b9; color: #111; }
.crumbs b { font-weight: 700; }
.history { margin-left: auto; }
.pane-buttons { display: flex; gap: 4px; padding: 0 2px 0 3px; }

.files-view { flex: 1; min-height: 0; display: flex; background: #fff; }
.files-scroll { flex: 1; min-width: 0; overflow: hidden; }
.files { width: 100%; table-layout: fixed; border-collapse: separate; border-spacing: 0; font-family: "Liberation Sans", Arial, sans-serif; line-height: 8px; color: #1c1cf4; }
.files td, .files th { padding: 0 3px 0 2px; white-space: nowrap; text-align: left; vertical-align: middle; }
.files th { font-family: "Noto Sans", sans-serif; font-weight: 700; color: #000; }
.files thead tr { height: 12px; }
.files tbody td { border-bottom: 1px solid #606060; border-right: 1px solid #dadada; }
.files tbody td:last-child { border-right: 0; }
.files .num { text-align: right; }
.files .name .icon { display: inline-block; height: 8px; vertical-align: top; }
.files th.name { padding-left: 4px; }
.files .focus td { box-shadow: inset 0 1px #b0b0b0; }
.files .focus td:last-child { box-shadow: none; }
.files .junction { color: #ee1020; }
.time { display: inline-block; width: 32px; }
.sort { display: inline-block; margin-left: 4px; border: 2px solid transparent; border-bottom-color: #999; vertical-align: middle; }
.short { height: 100%; }
.short tbody tr { height: 10px; }
.short .rest { height: auto; }
.short .last td, .short .rest td { border-bottom: 0; }
.long { height: calc(100% + 3px); }
.c-name { width: 342px; }
.c-size { width: 43px; }
.c-type { width: 74px; }
.c-name-s { width: 49px; }
.c-size-s { width: 36px; }
.c-type-s { width: 39px; }
.c-mod { width: 75px; }
.c-created { width: 55px; }

.status { display: flex; align-items: center; height: 11px; padding-left: 3px; background: #000; color: #e6e622; }
.page { width: 7px; height: 9px; margin-right: 4px; }
.status .bytes { flex: 1; margin-left: 4px; border-left: 1px solid #777; padding-left: 3px; line-height: 11px; }
.cell { display: flex; align-items: center; height: 11px; border-left: 1px solid #777; }
.lock-cell { width: 13px; padding-left: 2px; }
.disk { width: 53px; padding-left: 3px; gap: 2px; }
.meter { width: 13px; height: 5px; background: #23a0e4; }
```
